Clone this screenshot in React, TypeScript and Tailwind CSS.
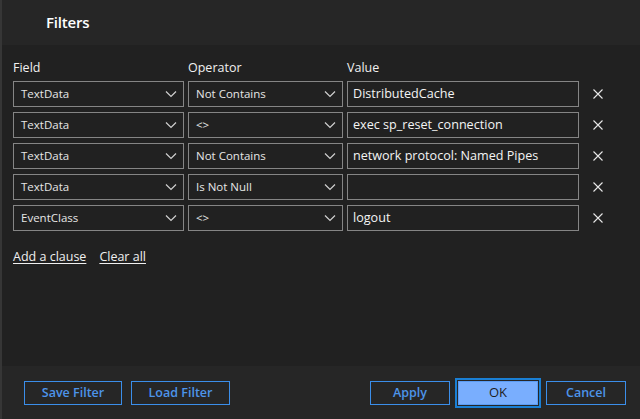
import React from "react";

const rows = [
  { field: "TextData", op: "Not Contains", value: "DistributedCache" },
  { field: "TextData", op: "<>", value: "exec sp_reset_connection" },
  { field: "TextData", op: "Not Contains", value: "network protocol: Named Pipes" },
  { field: "TextData", op: "Is Not Null", value: "" },
  { field: "EventClass", op: "<>", value: "logout" },
];

function Chevron() {
  return (
    <svg width="12" height="8" viewBox="0 0 12 8" className="shrink-0">
      <polyline points="1,1.5 6,6.5 11,1.5" fill="none" stroke="#d0d0d0" strokeWidth="1.2" />
    </svg>
  );
}

function XIcon() {
  return (
    <svg width="10" height="10" viewBox="0 0 10 10">
      <path d="M0.5 0.5 L9.5 9.5 M9.5 0.5 L0.5 9.5" stroke="#e8e8e8" strokeWidth="1.1" fill="none" />
    </svg>
  );
}

function Select({ text, width }: { text: string; width: string }) {
  return (
    <div
      className={`${width} h-[26px] border border-[#858585] flex items-center justify-between pl-[7px] pr-[6px] text-[11.5px] text-[#e6e6e6]`}
    >
      <span>{text}</span>
      <Chevron />
    </div>
  );
}

export default function App() {
  return (
    <div
      className="w-[640px] h-[419px] flex flex-col bg-[#212121] border-l-2 border-[#363636] overflow-hidden"
      style={{ fontFamily: '"Open Sans", "Noto Sans", sans-serif' }}
    >
      <div className="h-[45px] shrink-0 bg-[#262626] flex items-center pl-[44px]">
        <span className="text-[15px] font-semibold text-white tracking-[-0.2px]">Filters</span>
      </div>
      <div className="flex-1 pl-[11px] pt-[14px]">
        <div className="flex gap-[4px] h-[18px] text-[12.5px] text-[#f0f0f0] leading-[18px]">
          <div className="w-[171px]">Field</div>
          <div className="w-[155px]">Operator</div>
          <div className="w-[232px]">Value</div>
        </div>
        <div className="mt-[4px] flex flex-col gap-[5px]">
          {rows.map((r, i) => (
            <div key={i} className="flex items-center gap-[4px]">
              <Select text={r.field} width="w-[171px]" />
              <Select text={r.op} width="w-[155px]" />
              <div className="w-[232px] h-[26px] border border-[#858585] flex items-center px-[5px] text-[12.6px] text-[#f4f4f4]">
                {r.value}
              </div>
              <div className="ml-[10px] flex items-center">
                <XIcon />
              </div>
            </div>
          ))}
        </div>
        <div className="mt-[17px] flex gap-[13px] text-[12.5px] text-[#f0f0f0] leading-[18px]">
          <span className="underline underline-offset-2">Add a clause</span>
          <span className="underline underline-offset-2">Clear all</span>
        </div>
      </div>
      <div className="h-[53px] shrink-0 bg-[#262626] flex items-start pt-[15px] pl-[22px] pr-[14px] text-[12.5px]">
        <div className="flex gap-[9px]">
          <button className="w-[98px] h-[24px] border border-[#3b8eea] text-[#4d94ea] font-semibold">Save Filter</button>
          <button className="w-[99px] h-[24px] border border-[#3b8eea] text-[#4d94ea] font-semibold">Load Filter</button>
        </div>
        <div className="ml-auto flex items-start gap-[5px]">
          <button className="w-[80px] h-[24px] border border-[#3b8eea] text-[#4d94ea] font-semibold">Apply</button>
          <div className="-mt-[3px] w-[86px] h-[30px] border-2 border-[#1a7fd4] p-[1px]">
            <button className="w-full h-full bg-[#79aefe] border border-[#5a9cf5] text-[#1e1e1e] text-[13px]">OK</button>
          </div>
          <button className="w-[80px] h-[24px] border border-[#3b8eea] text-[#4d94ea] font-semibold">Cancel</button>
        </div>
      </div>
    </div>
  );
}
